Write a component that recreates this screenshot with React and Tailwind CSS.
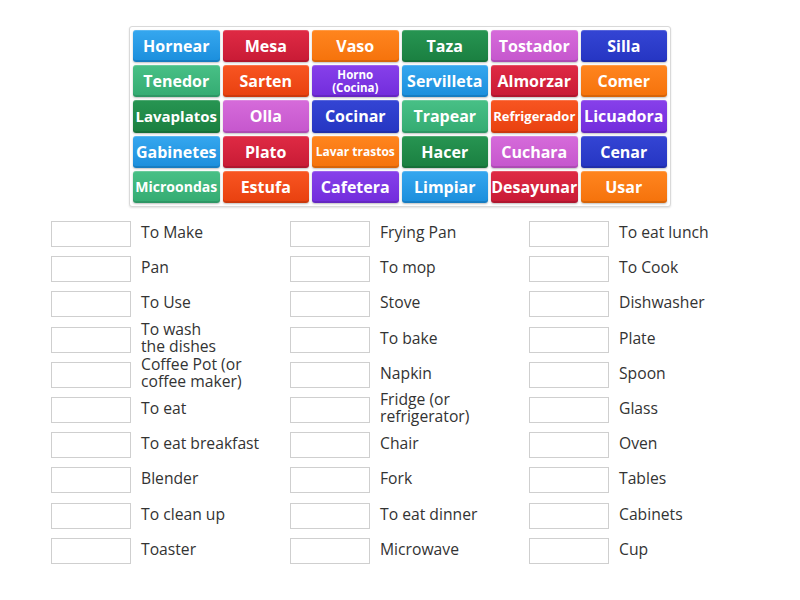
import React from "react";

const C = {
  blue: "bg-gradient-to-b from-[#35a7ef] to-[#1a8edc]",
  red: "bg-gradient-to-b from-[#df2a44] to-[#c81a35]",
  orange: "bg-gradient-to-b from-[#ff851e] to-[#f5720a]",
  dkgreen: "bg-gradient-to-b from-[#279552] to-[#1a7f40]",
  pink: "bg-gradient-to-b from-[#d66bda] to-[#c556cd]",
  dkblue: "bg-gradient-to-b from-[#3445d4] to-[#2535c2]",
  green: "bg-gradient-to-b from-[#48c086] to-[#34ab72]",
  orangered: "bg-gradient-to-b from-[#f85521] to-[#e8400e]",
  purple: "bg-gradient-to-b from-[#8740ea] to-[#722cdc]",
};

const tiles = [
  ["Hornear", "blue"], ["Mesa", "red"], ["Vaso", "orange"], ["Taza", "dkgreen"], ["Tostador", "pink"], ["Silla", "dkblue"],
  ["Tenedor", "green"], ["Sarten", "orangered"], ["HORNO", "purple", "small2"], ["Servilleta", "blue"], ["Almorzar", "red"], ["Comer", "orange"],
  ["Lavaplatos", "dkgreen", "s15"], ["Olla", "pink"], ["Cocinar", "dkblue"], ["Trapear", "green"], ["Refrigerador", "orangered", "s13"], ["Licuadora", "purple"],
  ["Gabinetes", "blue"], ["Plato", "red"], ["Lavar trastos", "orange", "s12"], ["Hacer", "dkgreen"], ["Cuchara", "pink"], ["Cenar", "dkblue"],
  ["Microondas", "green", "s14"], ["Estufa", "orangered"], ["Cafetera", "purple"], ["Limpiar", "blue"], ["Desayunar", "red"], ["Usar", "orange"],
];

const sizeCls = {
  s15: "text-[15px]",
  s14: "text-[14px]",
  s13: "text-[13px]",
  s12: "text-[12px]",
};

const rows = [
  [["To Make"], ["Frying Pan"], ["To eat lunch"]],
  [["Pan"], ["To mop"], ["To Cook"]],
  [["To Use"], ["Stove"], ["Dishwasher"]],
  [["To wash", "the dishes"], ["To bake"], ["Plate"]],
  [["Coffee Pot (or", "coffee maker)"], ["Napkin"], ["Spoon"]],
  [["To eat"], ["Fridge (or", "refrigerator)"], ["Glass"]],
  [["To eat breakfast"], ["Chair"], ["Oven"]],
  [["Blender"], ["Fork"], ["Tables"]],
  [["To clean up"], ["To eat dinner"], ["Cabinets"]],
  [["Toaster"], ["Microwave"], ["Cup"]],
];

function Tile({ label, color, size }) {
  const base =
    "flex items-center justify-center rounded-[3px] text-white font-bold whitespace-nowrap overflow-hidden shadow-[0_1px_2px_rgba(0,0,0,0.25),inset_0_1px_0_rgba(255,255,255,0.18),inset_0_-2px_0_rgba(0,0,0,0.12)] " +
    C[color];
  if (size === "small2") {
    return (
      <div className={base + " flex-col text-[11.5px] leading-[13px]"}>
        <span>Horno</span>
        <span>(Cocina)</span>
      </div>
    );
  }
  return <div className={base + " " + (sizeCls[size] || "text-[16px]")}>{label}</div>;
}

export default function App() {
  return (
    <div
      className="w-[800px] h-[600px] bg-white overflow-hidden"
      style={{ fontFamily: '"Open Sans", "Liberation Sans", sans-serif' }}
    >
      <div className="flex justify-center pt-[26px]">
        <div className="w-[542px] h-[181px] border border-[#d9d9d9] rounded-[3px] bg-white shadow-[0_1px_2px_rgba(0,0,0,0.12)] p-[3px] grid grid-cols-6 grid-rows-5 gap-[3px]">
          {tiles.map(([l, c, s], i) => (
            <Tile key={i} label={l} color={c} size={s} />
          ))}
        </div>
      </div>
      <div className="pl-[51px] pt-[14px] grid grid-cols-[239px_239px_239px] auto-rows-[26px] gap-y-[9.2px]">
        {rows.flatMap((r, ri) =>
          r.map((lines, ci) => (
            <div key={ri + "-" + ci} className="flex items-center">
              <div className="w-[80px] h-[26px] border border-[#cfcfcf] bg-white shrink-0" />
              <div className="ml-[10px] text-[15.7px] leading-[17px] text-[#333333] -mt-[3px] whitespace-nowrap">
                {lines.map((t, k) => (
                  <div key={k}>{t}</div>
                ))}
              </div>
            </div>
          ))
        )}
      </div>
    </div>
  );
}
